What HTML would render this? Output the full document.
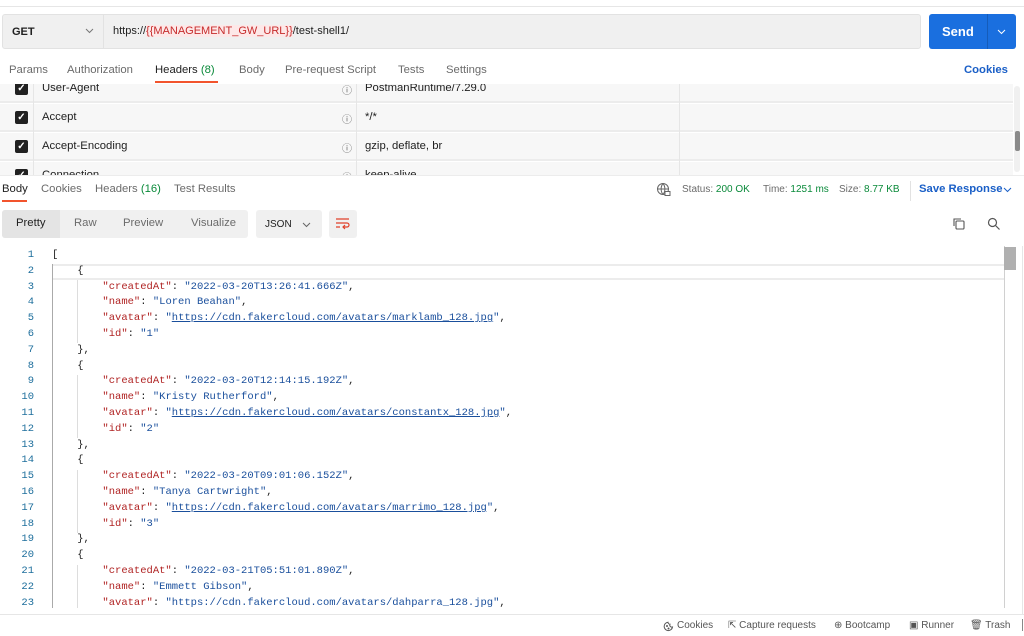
<!DOCTYPE html>
<html><head><meta charset="utf-8"><style>
*{margin:0;padding:0;box-sizing:border-box}
body{width:1024px;height:636px;overflow:hidden;background:#fff;font-family:"Liberation Sans",sans-serif;color:#212121;position:relative;font-size:11.3px}
.a{position:absolute;white-space:nowrap}
.g{color:#0a8a3a}
.tab{color:#6b6b6b}
.code{position:absolute;left:0;top:246px;width:1004px;height:362px;overflow:hidden;font-family:"Liberation Mono",monospace;font-size:10.5px}
.ln{position:absolute;left:0;width:34px;text-align:right;color:#1d6e9c}
.cl{position:absolute;left:52px;color:#212121;white-space:pre}
.k{color:#b02323}.s{color:#1a4f9c}.u{color:#1a4f9c;text-decoration:underline}
.row{position:absolute;left:0;width:1013px;height:28px;background:#f7f7f7;border-bottom:2px solid #ececec}
.cb{position:absolute;left:15px;width:13px;height:13px;background:#212121;border-radius:2px;color:#fff;font-size:10px;line-height:13px;text-align:center;font-weight:bold}
</style></head><body>
<div class="a" style="left:0;top:6px;width:1024px;height:1px;background:#e6e6e6"></div>
<!-- URL bar -->
<div class="a" style="left:2px;top:14px;width:919px;height:35px;background:#f0f0f0;border:1px solid #e2e2e2;border-radius:3px"></div>
<div class="a" style="left:103px;top:15px;width:1px;height:33px;background:#e2e2e2"></div>
<div class="a" style="left:12px;top:26px;font-weight:bold;font-size:11px">GET</div>
<svg class="a" style="left:85px;top:28px" width="9" height="6" viewBox="0 0 9 6" fill="none" stroke="#777" stroke-width="1"><path d="M1 1l3.5 3.5L8 1"/></svg>
<div class="a" style="left:113px;top:25px;font-size:11px">https://<span style="color:#c62b2b;background:#fde8e8">{{MANAGEMENT_GW_URL}}</span>/test-shell1/</div>
<div class="a" style="left:929px;top:14px;width:87px;height:35px;background:#1a6fdf;border-radius:3px"></div>
<div class="a" style="left:987px;top:14px;width:1px;height:35px;background:#155cba"></div>
<div class="a" style="left:942px;top:24px;color:#fff;font-weight:bold;font-size:13px">Send</div>
<svg class="a" style="left:997px;top:29px" width="9" height="6" viewBox="0 0 9 6" fill="none" stroke="#fff" stroke-width="1"><path d="M1 1l3.5 3.5L8 1"/></svg>
<!-- tabs -->
<div class="a tab" style="left:9px;top:64px">Params</div>
<div class="a tab" style="left:67px;top:64px">Authorization</div>
<div class="a" style="left:155px;top:64px">Headers <span class="g">(8)</span></div>
<div class="a" style="left:155px;top:81px;width:63px;height:2px;background:#f2542d"></div>
<div class="a tab" style="left:239px;top:64px">Body</div>
<div class="a tab" style="left:285px;top:64px">Pre-request Script</div>
<div class="a tab" style="left:398px;top:64px">Tests</div>
<div class="a tab" style="left:446px;top:64px">Settings</div>
<div class="a" style="left:964px;top:64px;color:#1a5fc7;font-weight:bold">Cookies</div>
<!-- header rows -->
<div class="a" style="left:0;top:84px;width:1024px;height:91px;overflow:hidden">
 <div class="row" style="top:-9px"></div>
 <div class="row" style="top:20px"></div>
 <div class="row" style="top:49px"></div>
 <div class="row" style="top:78px"></div>
 <div class="a" style="left:33px;top:0;width:1px;height:91px;background:#e6e6e6"></div>
 <div class="a" style="left:356px;top:0;width:1px;height:91px;background:#e6e6e6"></div>
 <div class="a" style="left:679px;top:0;width:1px;height:91px;background:#e6e6e6"></div>
 <div class="cb" style="top:-2px">✓</div><div class="cb" style="top:27px">✓</div><div class="cb" style="top:56px">✓</div><div class="cb" style="top:85px">✓</div>
 <div class="a" style="left:42px;top:-2px">User-Agent</div>
 <div class="a" style="left:42px;top:27px">Accept</div>
 <div class="a" style="left:42px;top:56px">Accept-Encoding</div>
 <div class="a" style="left:42px;top:85px">Connection</div>
 <div class="a" style="left:342px;top:-2px;color:#666;font-size:10px">ⓘ</div>
 <div class="a" style="left:342px;top:27px;color:#666;font-size:10px">ⓘ</div>
 <div class="a" style="left:342px;top:56px;color:#666;font-size:10px">ⓘ</div>
 <div class="a" style="left:342px;top:85px;color:#666;font-size:10px">ⓘ</div>
 <div class="a" style="left:365px;top:-2px">PostmanRuntime/7.29.0</div>
 <div class="a" style="left:365px;top:27px">*/*</div>
 <div class="a" style="left:365px;top:56px">gzip, deflate, br</div>
 <div class="a" style="left:365px;top:85px">keep-alive</div>
 <div class="a" style="left:1014px;top:2px;width:6px;height:86px;background:#f0f0f0;border-radius:3px"></div>
 <div class="a" style="left:1015px;top:47px;width:5px;height:20px;background:#8a8a8a;border-radius:2px"></div>
</div>
<div class="a" style="left:0;top:175px;width:1024px;height:1px;background:#ececec"></div>
<!-- response tabs -->
<div class="a" style="left:2px;top:183px">Body</div>
<div class="a" style="left:2px;top:200px;width:25px;height:2px;background:#f2542d"></div>
<div class="a tab" style="left:41px;top:183px">Cookies</div>
<div class="a tab" style="left:95px;top:183px">Headers <span class="g">(16)</span></div>
<div class="a tab" style="left:174px;top:183px">Test Results</div>
<svg class="a" style="left:656px;top:182px" width="16" height="16" viewBox="0 0 16 16" fill="none" stroke="#666" stroke-width="1"><circle cx="7" cy="7" r="5.5"/><path d="M1.5 7h11M7 1.5c-2.5 3-2.5 8 0 11M7 1.5c2.5 3 2.5 8 0 11"/><rect x="9" y="9.5" width="5" height="4" fill="#fff"/></svg>
<div class="a" style="left:682px;top:184px;font-size:10px;color:#6b6b6b">Status: <span class="g">200 OK</span></div>
<div class="a" style="left:763px;top:184px;font-size:10px;color:#6b6b6b">Time: <span class="g">1251 ms</span></div>
<div class="a" style="left:839px;top:184px;font-size:10px;color:#6b6b6b">Size: <span class="g">8.77 KB</span></div>
<div class="a" style="left:910px;top:181px;width:1px;height:20px;background:#e2e2e2"></div>
<div class="a" style="left:919px;top:183px;color:#1a5fc7;font-weight:bold">Save Response</div>
<svg class="a" style="left:1003px;top:187px" width="9" height="6" viewBox="0 0 9 6" fill="none" stroke="#1a5fc7" stroke-width="1"><path d="M1 1l3.5 3.5L8 1"/></svg>
<!-- toolbar -->
<div class="a" style="left:2px;top:210px;width:246px;height:28px;background:#f0f0f0;border-radius:3px"></div>
<div class="a" style="left:2px;top:210px;width:58px;height:28px;background:#e4e4e4;border-radius:3px 0 0 3px"></div>
<div class="a" style="left:16px;top:217px">Pretty</div>
<div class="a tab" style="left:74px;top:217px">Raw</div>
<div class="a tab" style="left:123px;top:217px">Preview</div>
<div class="a tab" style="left:191px;top:217px">Visualize</div>
<div class="a" style="left:256px;top:210px;width:66px;height:28px;background:#f0f0f0;border-radius:3px"></div>
<div class="a" style="left:265px;top:219px;font-size:10px">JSON</div>
<svg class="a" style="left:302px;top:222px" width="9" height="6" viewBox="0 0 9 6" fill="none" stroke="#666" stroke-width="1"><path d="M1 1l3.5 3.5L8 1"/></svg>
<div class="a" style="left:329px;top:210px;width:28px;height:28px;background:#f0f0f0;border-radius:3px"></div>
<svg class="a" style="left:335px;top:217px" width="16" height="14" viewBox="0 0 16 14" fill="none" stroke="#e0412a" stroke-width="1.2"><path d="M1 2h13M1 6h11a2 2 0 0 1 0 4H8M10 8l-2 2 2 2M1 10h4"/></svg>
<svg class="a" style="left:952px;top:217px" width="14" height="14" viewBox="0 0 14 14" fill="none" stroke="#555" stroke-width="1.1"><rect x="4" y="4" width="8" height="8" rx="1"/><path d="M2 9V2h7"/></svg>
<svg class="a" style="left:987px;top:217px" width="14" height="14" viewBox="0 0 14 14" fill="none" stroke="#555" stroke-width="1.2"><circle cx="5.5" cy="5.5" r="4"/><path d="M8.5 8.5l4 4"/></svg>
<!-- code -->
<div class="code">
<div class="a" style="left:52px;top:18px;width:952px;height:16px;border-top:2px solid #ececec;border-bottom:2px solid #ececec"></div>
<div class="a" style="left:52px;top:18px;width:1px;height:344px;background:#aaa"></div>
<div class="a" style="left:77px;top:34px;width:1px;height:63px;background:#ddd"></div>
<div class="a" style="left:77px;top:129px;width:1px;height:63px;background:#ddd"></div>
<div class="a" style="left:77px;top:224px;width:1px;height:63px;background:#ddd"></div>
<div class="a" style="left:77px;top:319px;width:1px;height:50px;background:#ddd"></div>
<div id="lines"></div>
</div>
<div class="a" style="left:1004px;top:246px;width:1px;height:362px;background:#d0d0d0"></div>
<div class="a" style="left:1004px;top:247px;width:12px;height:23px;background:#b0b0b0"></div>
<div class="a" style="left:1022px;top:246px;width:1px;height:368px;background:#e6e6e6"></div>
<!-- footer -->
<div class="a" style="left:0;top:614px;width:1024px;height:1px;background:#e6e6e6"></div>
<svg class="a" style="left:663px;top:621px" width="11" height="11" viewBox="0 0 11 11" fill="none" stroke="#555" stroke-width="1"><path d="M9.5 6A4.2 4.2 0 1 1 5 1.2a2 2 0 0 0 2 2 2 2 0 0 0 2.5 2.8z"/><circle cx="4" cy="5" r=".5"/><circle cx="5.5" cy="7.5" r=".5"/></svg>
<div class="a" style="left:677px;top:620px;font-size:10px;color:#555">Cookies</div>
<div class="a" style="left:728px;top:620px;font-size:10px;color:#555">⇱ Capture requests</div>
<div class="a" style="left:834px;top:620px;font-size:10px;color:#555">⊕ Bootcamp</div>
<div class="a" style="left:909px;top:620px;font-size:10px;color:#555">▣ Runner</div>
<div class="a" style="left:970px;top:620px;font-size:10px;color:#555">🗑 Trash</div>
<div class="a" style="left:1022px;top:619px;width:1px;height:12px;background:#888"></div>
<script>
var L=[
'[',
'    {',
'        <span class="k">"createdAt"</span>: <span class="s">"2022-03-20T13:26:41.666Z"</span>,',
'        <span class="k">"name"</span>: <span class="s">"Loren Beahan"</span>,',
'        <span class="k">"avatar"</span>: <span class="s">"</span><span class="u">https://cdn.fakercloud.com/avatars/marklamb_128.jpg</span><span class="s">"</span>,',
'        <span class="k">"id"</span>: <span class="s">"1"</span>',
'    },',
'    {',
'        <span class="k">"createdAt"</span>: <span class="s">"2022-03-20T12:14:15.192Z"</span>,',
'        <span class="k">"name"</span>: <span class="s">"Kristy Rutherford"</span>,',
'        <span class="k">"avatar"</span>: <span class="s">"</span><span class="u">https://cdn.fakercloud.com/avatars/constantx_128.jpg</span><span class="s">"</span>,',
'        <span class="k">"id"</span>: <span class="s">"2"</span>',
'    },',
'    {',
'        <span class="k">"createdAt"</span>: <span class="s">"2022-03-20T09:01:06.152Z"</span>,',
'        <span class="k">"name"</span>: <span class="s">"Tanya Cartwright"</span>,',
'        <span class="k">"avatar"</span>: <span class="s">"</span><span class="u">https://cdn.fakercloud.com/avatars/marrimo_128.jpg</span><span class="s">"</span>,',
'        <span class="k">"id"</span>: <span class="s">"3"</span>',
'    },',
'    {',
'        <span class="k">"createdAt"</span>: <span class="s">"2022-03-21T05:51:01.890Z"</span>,',
'        <span class="k">"name"</span>: <span class="s">"Emmett Gibson"</span>,',
'        <span class="k">"avatar"</span>: <span class="s">"https://cdn.fakercloud.com/avatars/dahparra_128.jpg"</span>,'
];
var h='';for(var i=0;i<L.length;i++){var t=3+i*15.8;h+='<div class="ln" style="top:'+t+'px">'+(i+1)+'</div><div class="cl" style="top:'+t+'px">'+L[i]+'</div>';}
document.getElementById('lines').innerHTML=h;
</script>
</body></html>
